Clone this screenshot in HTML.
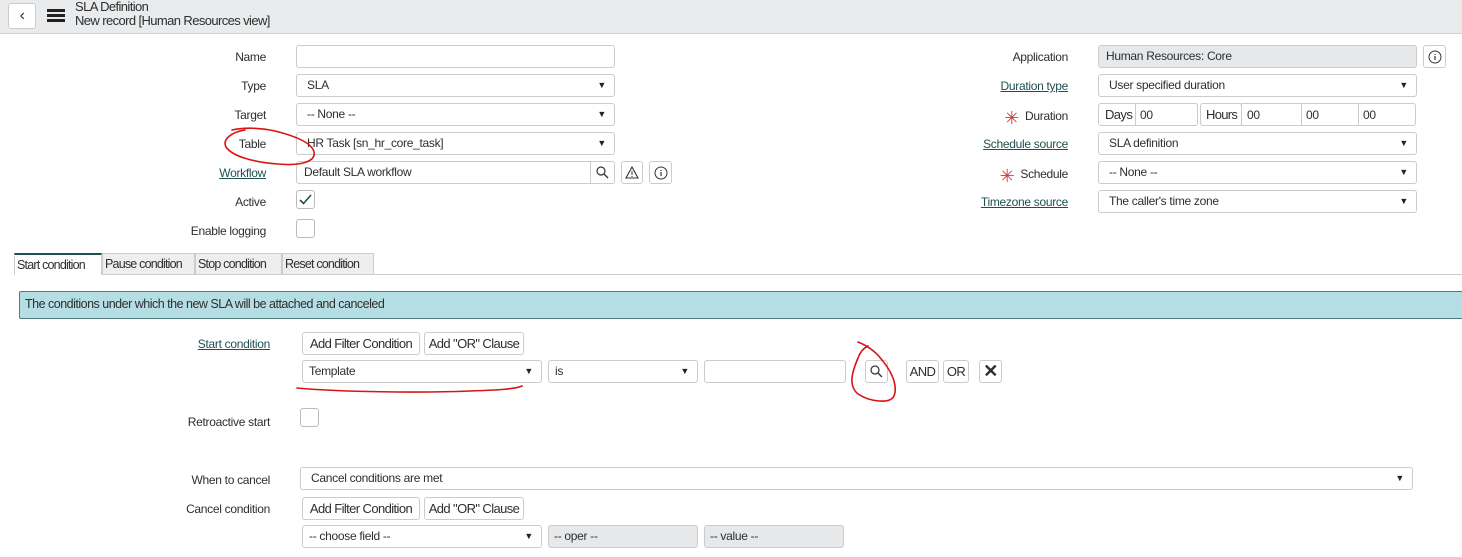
<!DOCTYPE html>
<html><head><meta charset="utf-8"><style>
*{box-sizing:border-box;margin:0;padding:0}
body{width:1462px;height:557px;overflow:hidden;background:#fff;font-family:"Liberation Sans Narrow","Liberation Sans",sans-serif;font-size:12px;color:#2e2e2e;letter-spacing:-0.3px;position:relative}
.a{position:absolute}
.hdr{left:0;top:0;width:1462px;height:34px;background:#e9ebed;border-bottom:1px solid #cfd3d6}
.lbl{position:absolute;text-align:right;white-space:nowrap}
.lnk{text-decoration:underline;color:#1f4f4f}
.in{position:absolute;height:23px;border:1px solid #ccc;border-radius:3px;background:#fff;padding:0 10px;line-height:21px;white-space:nowrap}
.sel:after{content:"\25BC";position:absolute;right:8px;top:0;font-size:9px;color:#222}
.gray{background:#e6e8ea}
.btn{position:absolute;height:23px;border:1px solid #ccc;border-radius:3px;background:#fff;text-align:center;line-height:21px;font-size:13px;white-space:nowrap;letter-spacing:-0.6px}
.cb{position:absolute;width:19px;height:19px;border:1px solid #bbb;border-radius:3px;background:#fff}
.tab{position:absolute;top:253px;height:22px;border:1px solid #ccc;background:#eee;line-height:20px;padding:0 2px;font-size:12.5px;white-space:nowrap;overflow:hidden;letter-spacing:-0.8px}
</style></head><body>
<div class="a hdr"></div>
<div class="btn" style="left:8px;top:3px;width:28px;height:26px;line-height:24px;font-size:16px">&#8249;</div>
<div class="a" style="left:47px;top:9px;width:18px;height:3px;background:#222"></div>
<div class="a" style="left:47px;top:14px;width:18px;height:3px;background:#222"></div>
<div class="a" style="left:47px;top:19px;width:18px;height:3px;background:#222"></div>
<div class="a" style="left:75px;top:0;font-size:13px;line-height:14px;letter-spacing:-0.6px">SLA Definition</div>
<div class="a" style="left:75px;top:13px;font-size:13px;line-height:15px;letter-spacing:-0.6px">New record [Human Resources view]</div>

<div class="lbl" style="right:1196px;top:50px">Name</div>
<div class="lbl" style="right:1196px;top:79px">Type</div>
<div class="lbl" style="right:1196px;top:108px">Target</div>
<div class="lbl" style="right:1196px;top:137px">Table</div>
<div class="lbl lnk" style="right:1196px;top:166px">Workflow</div>
<div class="lbl" style="right:1196px;top:195px">Active</div>
<div class="lbl" style="right:1196px;top:224px">Enable logging</div>

<div class="in" style="left:296px;top:45px;width:319px"></div>
<div class="in sel" style="left:296px;top:74px;width:319px">SLA</div>
<div class="in sel" style="left:296px;top:103px;width:319px">-- None --</div>
<div class="in sel" style="left:296px;top:132px;width:319px">HR Task [sn_hr_core_task]</div>
<div class="in" style="left:296px;top:161px;width:295px;padding-left:7px;border-radius:3px 0 0 3px">Default SLA workflow</div>
<div class="btn" style="left:590px;top:161px;width:25px;border-radius:0 3px 3px 0"><svg width="13" height="13" viewBox="0 0 13 13" style="margin-top:4px"><circle cx="5" cy="5" r="4" fill="none" stroke="#333" stroke-width="1.2"/><path d="M8 8l4 4" stroke="#333" stroke-width="1.3"/></svg></div>
<div class="btn" style="left:621px;top:161px;width:22px"><svg width="14" height="13" viewBox="0 0 14 13" style="margin-top:4px"><path d="M7 1L13 12H1Z" fill="none" stroke="#333" stroke-width="1.1"/><path d="M7 5v4M7 10v1" stroke="#333"/></svg></div>
<div class="btn" style="left:649px;top:161px;width:23px"><svg width="14" height="14" viewBox="0 0 14 14" style="margin-top:4px"><circle cx="7" cy="7" r="6" fill="none" stroke="#333"/><path d="M7 6v4M7 4v1" stroke="#333" stroke-width="1.2"/></svg></div>
<div class="cb" style="left:296px;top:190px"><svg width="17" height="17" viewBox="0 0 17 17"><path d="M3 9l3.5 3.5L14 4" fill="none" stroke="#1f4f4f" stroke-width="1.6"/></svg></div>
<div class="cb" style="left:296px;top:219px"></div>

<div class="lbl" style="right:394px;top:50px">Application</div>
<div class="lbl lnk" style="right:394px;top:79px">Duration type</div>
<div class="lbl" style="right:394px;top:108px"><span style="color:#c83c3c;font-size:18px;vertical-align:-4px;margin-right:6px">&#x2733;</span>Duration</div>
<div class="lbl lnk" style="right:394px;top:137px">Schedule source</div>
<div class="lbl" style="right:394px;top:166px"><span style="color:#c83c3c;font-size:18px;vertical-align:-4px;margin-right:6px">&#x2733;</span>Schedule</div>
<div class="lbl lnk" style="right:394px;top:195px">Timezone source</div>

<div class="in gray" style="left:1098px;top:45px;width:319px;padding-left:7px">Human Resources: Core</div>
<div class="btn" style="left:1423px;top:45px;width:23px"><svg width="14" height="14" viewBox="0 0 14 14" style="margin-top:4px"><circle cx="7" cy="7" r="6" fill="none" stroke="#333"/><path d="M7 6v4M7 4v1" stroke="#333" stroke-width="1.2"/></svg></div>
<div class="in sel" style="left:1098px;top:74px;width:319px">User specified duration</div>
<div class="in" style="left:1098px;top:103px;width:100px;padding:0 0 0 6px;font-size:13px;letter-spacing:-0.6px">Days</div>
<div class="in" style="left:1135px;top:103px;width:63px;padding-left:4px;border-radius:0 3px 3px 0;line-height:23px">00</div>
<div class="in" style="left:1200px;top:103px;width:42px;padding:0 0 0 5px;font-size:13px;letter-spacing:-0.7px">Hours</div>
<div class="in" style="left:1241px;top:103px;width:61px;padding-left:5px;border-radius:0;line-height:23px">00</div>
<div class="in" style="left:1301px;top:103px;width:58px;padding-left:4px;border-radius:0;line-height:23px">00</div>
<div class="in" style="left:1358px;top:103px;width:58px;padding-left:4px;border-radius:0 3px 3px 0;line-height:23px">00</div>
<div class="in sel" style="left:1098px;top:132px;width:319px">SLA definition</div>
<div class="in sel" style="left:1098px;top:161px;width:319px">-- None --</div>
<div class="in sel" style="left:1098px;top:190px;width:319px">The caller's time zone</div>

<div class="a" style="left:101px;top:274px;width:1361px;height:1px;background:#ccc"></div>
<div class="tab" style="left:14px;width:88px;background:#fff;border-top:2px solid #1f4f4f;border-bottom:none;height:22px">Start condition</div>
<div class="tab" style="left:102px;width:93px">Pause condition</div>
<div class="tab" style="left:195px;width:87px">Stop condition</div>
<div class="tab" style="left:282px;width:92px">Reset condition</div>

<div class="a" style="left:19px;top:291px;width:1450px;height:28px;background:#b5dde4;border:1px solid #4f7c7c;border-radius:2px;padding-left:5px;line-height:25px;font-size:12.5px;letter-spacing:-0.5px">The conditions under which the new SLA will be attached and canceled</div>

<div class="lbl lnk" style="right:1192px;top:337px">Start condition</div>
<div class="btn" style="left:302px;top:332px;width:118px">Add Filter Condition</div>
<div class="btn" style="left:424px;top:332px;width:100px">Add "OR" Clause</div>
<div class="in sel" style="left:302px;top:360px;width:240px;padding-left:6px">Template</div>
<div class="in sel" style="left:548px;top:360px;width:150px;padding-left:6px">is</div>
<div class="in" style="left:704px;top:360px;width:142px"></div>
<div class="btn" style="left:865px;top:360px;width:23px"><svg width="13" height="13" viewBox="0 0 13 13" style="margin-top:4px"><circle cx="5" cy="5" r="4" fill="none" stroke="#333" stroke-width="1.2"/><path d="M8 8l4 4" stroke="#333" stroke-width="1.3"/></svg></div>
<div class="btn" style="left:906px;top:360px;width:33px">AND</div>
<div class="btn" style="left:943px;top:360px;width:26px">OR</div>
<div class="btn" style="left:979px;top:360px;width:23px;font-size:18px;font-weight:bold">&#x2715;</div>

<div class="lbl" style="right:1192px;top:415px">Retroactive start</div>
<div class="cb" style="left:300px;top:408px"></div>

<div class="lbl" style="right:1192px;top:473px">When to cancel</div>
<div class="in sel" style="left:300px;top:467px;width:1113px">Cancel conditions are met</div>
<div class="lbl" style="right:1192px;top:502px">Cancel condition</div>
<div class="btn" style="left:302px;top:497px;width:118px">Add Filter Condition</div>
<div class="btn" style="left:424px;top:497px;width:100px">Add "OR" Clause</div>
<div class="in sel" style="left:302px;top:525px;width:240px;padding-left:6px">-- choose field --</div>
<div class="in gray" style="left:548px;top:525px;width:150px;padding-left:5px">-- oper --</div>
<div class="in gray" style="left:704px;top:525px;width:140px;padding-left:5px">-- value --</div>

<svg class="a" style="left:0;top:0" width="1462" height="557">
<g fill="none" stroke="#d81414" stroke-width="1.6" stroke-linecap="round">
<path d="M232 130C245 127 262 128 275 131C295 136 312 143 314 152C316 162 300 166 278 164C252 162 232 156 226 147C222 139 232 132 245 130"/>
<path d="M297 388C340 392 420 393 470 391C500 390 515 389 522 386"/>
<path d="M858 342C868 346 876 352 882 360C892 372 898 386 894 396C890 404 870 402 858 394C848 386 852 372 858 358C860 352 864 348 868 346"/>
</g></svg>
</body></html>
